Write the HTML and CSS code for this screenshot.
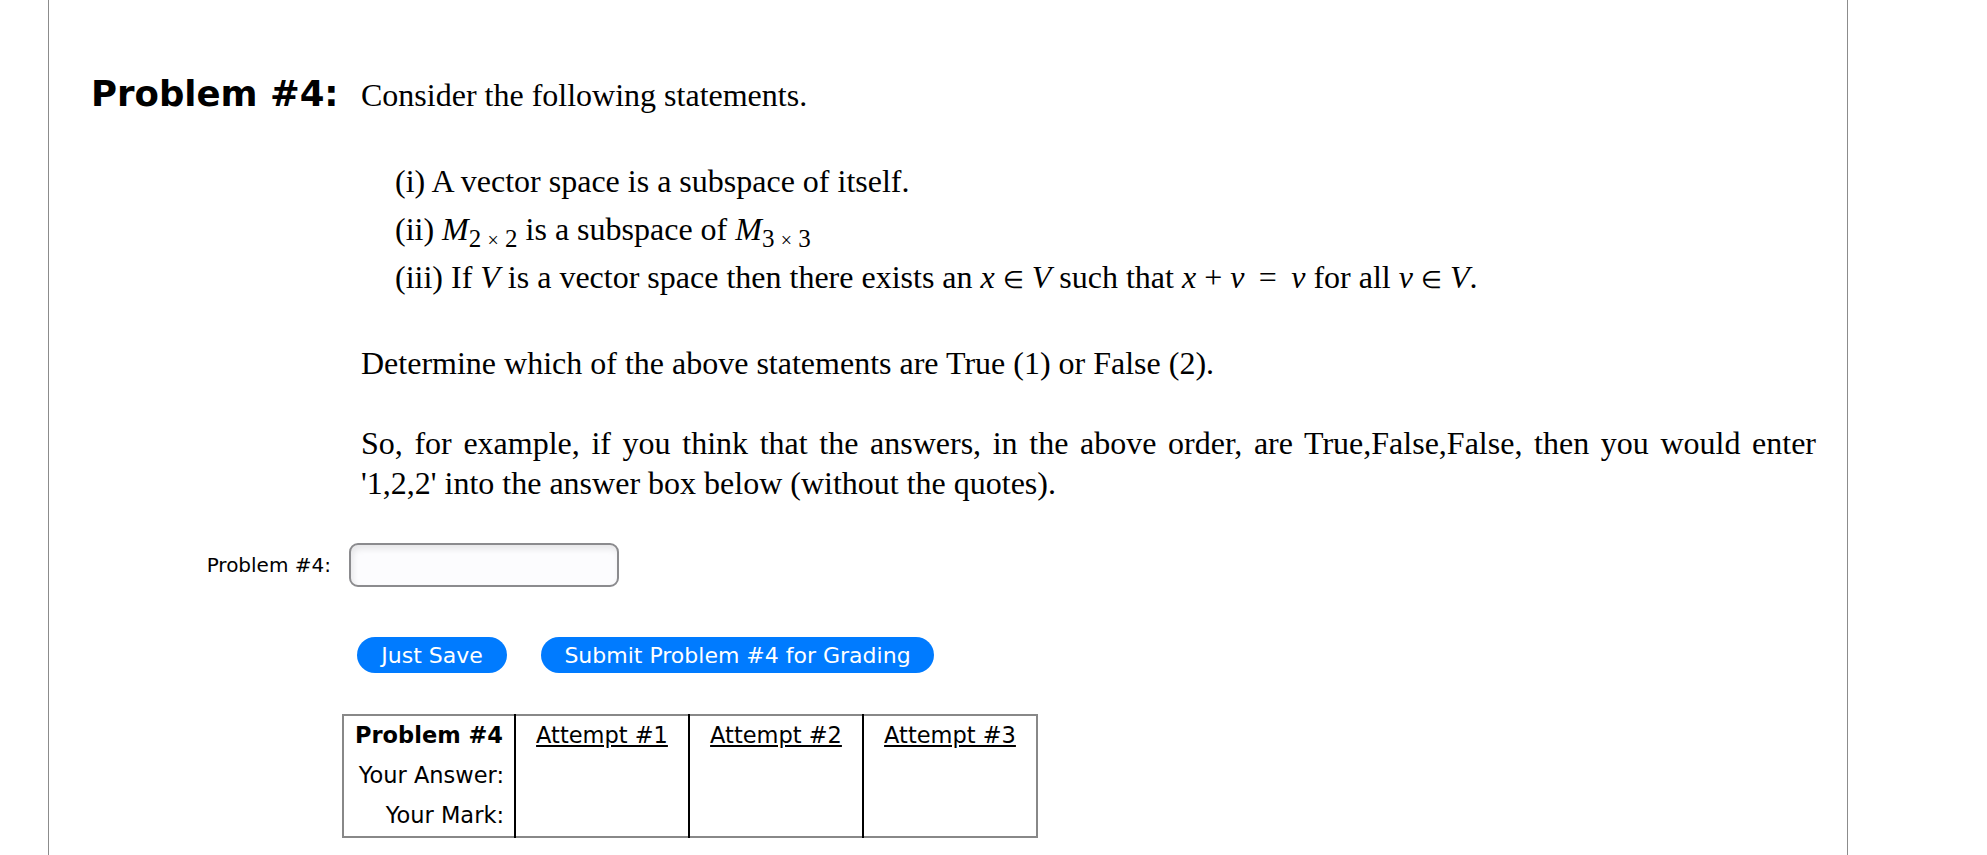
FILE: index.html
```html
<!DOCTYPE html>
<html lang="en">
<head>
    <meta charset="UTF-8">
    <meta name="viewport" content="width=device-width, initial-scale=1.0">
    <title>Problem #4</title>
    <link rel="stylesheet" href="styles.css">
</head>
<body>
    <div class="page">
        <!-- Question -->
        <div class="problem">
            <h1 class="problem-title">Problem #4:</h1>
            <div class="problem-body">
                <p class="lead">Consider the following statements.</p>
                <ol class="statements">
                    <li>(i) A vector space is a subspace of itself.</li>
                    <li>(ii) <i>M</i><span class="sub">2 <span class="times">×</span> 2</span> is a subspace of <i>M</i><span class="sub">3 <span class="times">×</span> 3</span></li>
                    <li>(iii) If <i>V</i> is a vector space then there exists an <i>x</i> <span class="rel">∈</span> <i>V</i> such that <i>x</i> + <i>v</i>&thinsp; = &thinsp;<i>v</i> for all <i>v</i> <span class="rel">∈</span> <i>V</i>.</li>
                </ol>
                <p class="para">Determine which of the above statements are True (1) or False (2).</p>
                <p class="para example">So, for example, if you think that the answers, in the above order, are True,False,False, then you would enter '1,2,2' into the answer box below (without the quotes).</p>
            </div>
        </div>

        <!-- Answer -->
        <div class="answer-row">
            <label for="answer">Problem #4:</label>
            <input type="text" id="answer">
        </div>

        <div class="actions">
            <button class="save-button">Just Save</button>
            <button class="submit-button">Submit Problem #4 for Grading</button>
        </div>

        <!-- Attempts -->
        <table class="attempts">
            <tr>
                <th>Problem #4</th>
                <td><a href="#">Attempt #1</a></td>
                <td><a href="#">Attempt #2</a></td>
                <td><a href="#">Attempt #3</a></td>
            </tr>
            <tr>
                <td class="row-label">Your Answer:</td>
                <td></td>
                <td></td>
                <td></td>
            </tr>
            <tr>
                <td class="row-label">Your Mark:</td>
                <td></td>
                <td></td>
                <td></td>
            </tr>
        </table>
    </div>
</body>
</html>
```

FILE: styles.css
```css
body {
    margin: 0;
    background-color: white;
    color: black;
    font-family: "DejaVu Sans", Verdana, sans-serif;
}
.page {
    box-sizing: border-box;
    width: 1800px;
    min-height: 100vh;
    margin-left: 48px;
    padding: 73px 31px 20px 42px;
    border-left: 1px solid #8c8c8c;
    border-right: 1px solid #8c8c8c;
}
.problem {
    display: flex;
    align-items: baseline;
}
.problem-title {
    flex: 0 0 270px;
    margin: 0;
    font-size: 35.5px;
    line-height: 41px;
    font-weight: bold;
}
.problem-body {
    flex: 1;
    font-family: "Liberation Serif", "Times New Roman", serif;
    font-size: 32px;
    line-height: 40px;
}
.problem-body p {
    margin: 0;
}
.statements {
    list-style: none;
    margin: 42px 0 0 34px;
    padding: 0;
    line-height: 48px;
}
.sub {
    font-size: 25px;
    line-height: 0;
    vertical-align: -7px;
}
.times {
    font-size: 20px;
}
.rel {
    font-size: 24px;
}
.para {
    margin-top: 39px !important;
}
.example {
    margin-top: 40px !important;
    text-align: justify;
}
.answer-row {
    display: flex;
    align-items: center;
    gap: 18px;
    margin-top: 40px;
}
.answer-row label {
    width: 240px;
    text-align: right;
    font-size: 20px;
}
.answer-row input {
    box-sizing: border-box;
    width: 270px;
    height: 44px;
    border: 2px solid #8b8b8e;
    border-radius: 9px;
    background-color: #fcfcfe;
    box-shadow: inset 2px 4px 6px rgba(0,0,0,0.09);
    font-size: 20px;
    padding: 0 8px;
}
.actions {
    display: flex;
    gap: 34px;
    margin: 50px 0 0 266px;
}
.actions button {
    box-sizing: border-box;
    height: 36px;
    padding: 0 16px;
    border: none;
    border-radius: 18px;
    background-color: #007bff;
    color: white;
    font-family: "DejaVu Sans", Verdana, sans-serif;
    font-size: 22px;
    cursor: pointer;
}
.save-button {
    width: 150px;
}
.submit-button {
    width: 393px;
}
.attempts {
    table-layout: fixed;
    width: 696px;
    margin: 41px 0 0 251px;
    border-collapse: collapse;
    border: 2px solid #888;
    font-size: 22.5px;
}
.attempts th, .attempts td {
    padding: 6px 10px 7px;
    line-height: 27px;
    text-align: center;
    white-space: nowrap;
}
.attempts th {
    width: 150px;
}
.attempts td {
    border-left: 2px solid black;
}
.attempts td.row-label {
    border-left: none;
    text-align: right;
}
.attempts a {
    color: black;
}
```
